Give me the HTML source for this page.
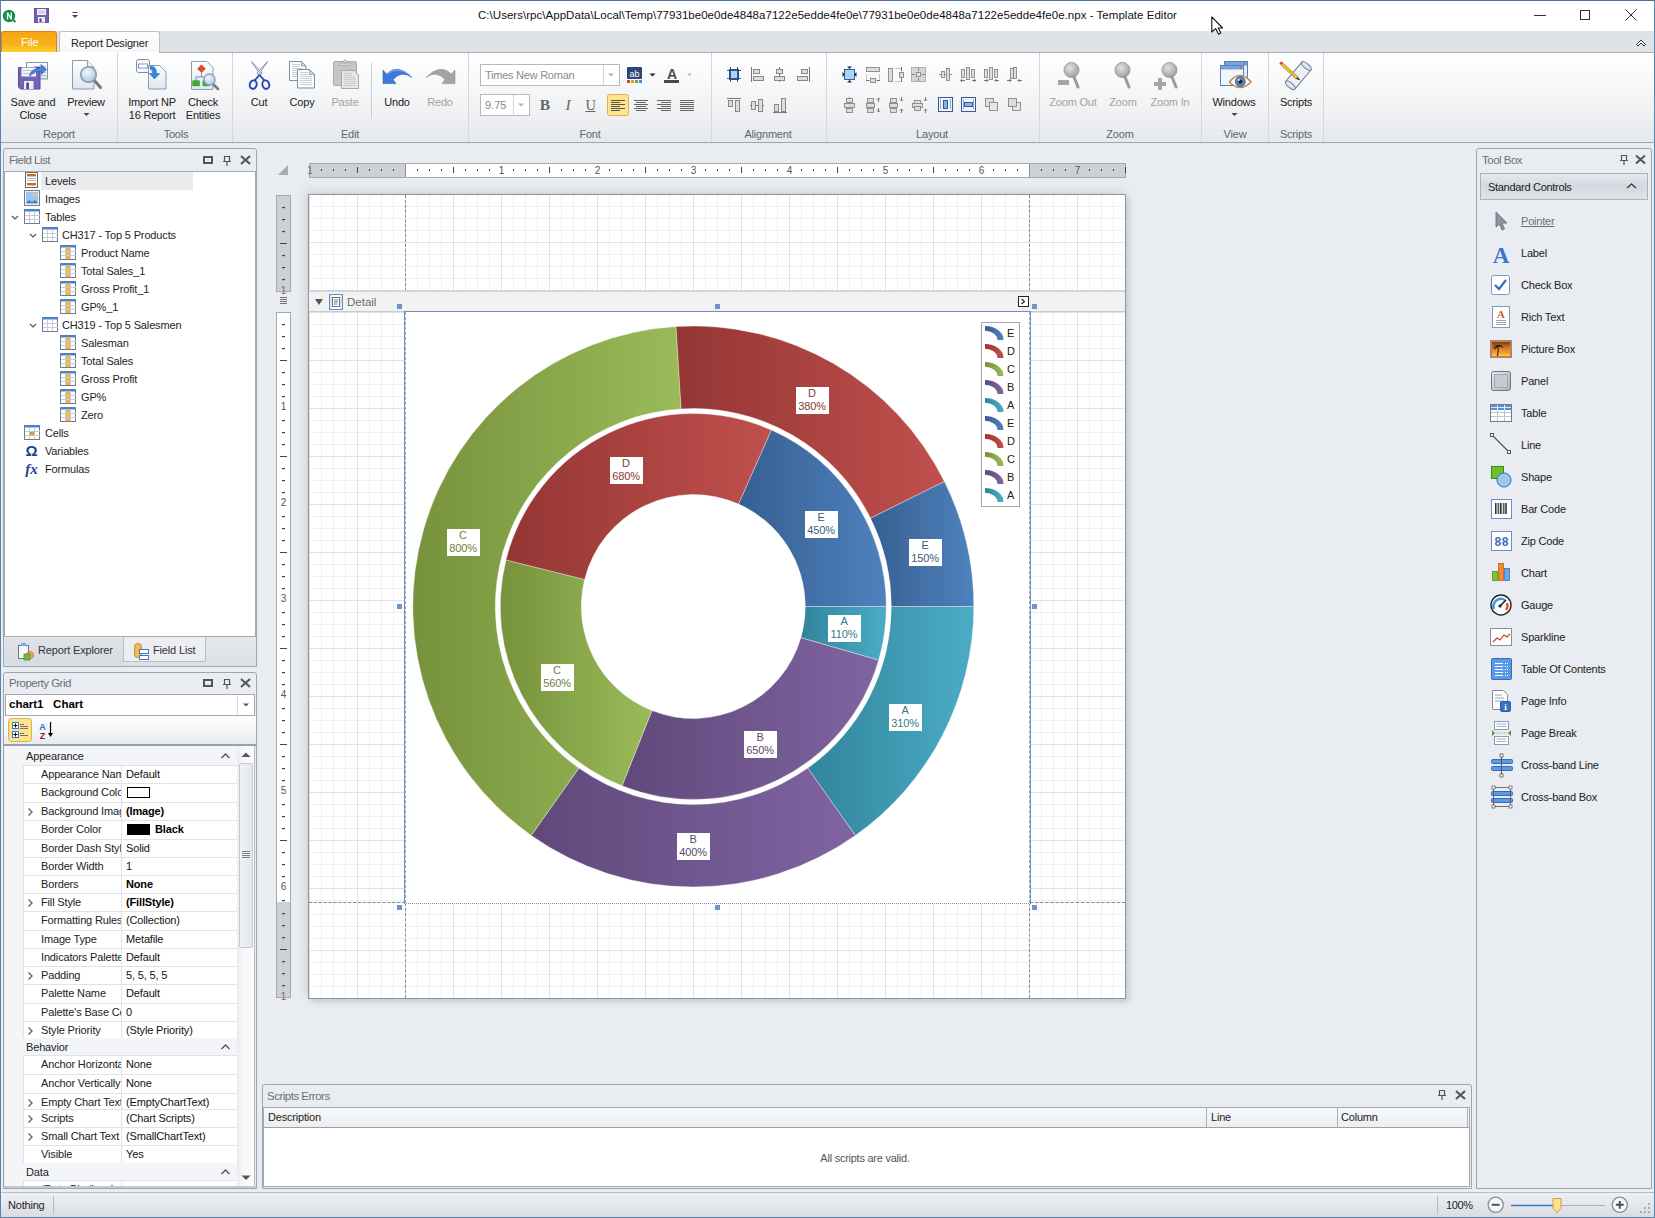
<!DOCTYPE html>
<html><head><meta charset="utf-8">
<style>
*{box-sizing:border-box;margin:0;padding:0}
html,body{width:1655px;height:1218px;overflow:hidden;background:#e9ecf0;font-family:"Liberation Sans",sans-serif;font-size:11px;color:#1e1e1e}
.a{position:absolute}
.t{position:absolute;white-space:nowrap;line-height:1}
svg{position:absolute;overflow:visible}
.gl{color:#5b5b5b}
.rl{position:absolute;top:129px;text-align:center;white-space:nowrap;line-height:1;color:#5e6670;letter-spacing:-0.2px}
.bl{position:absolute;width:100px;text-align:center;white-space:nowrap;line-height:13px;letter-spacing:-0.2px;color:#222}
.dis{color:#a3a3a3}
.hdr{color:#6b7079;font-size:11.5px;letter-spacing:-0.5px}
.tr{letter-spacing:-0.15px}
.lab{width:33px;height:27px;background:#fff;text-align:center;font-size:11px;line-height:13px;padding-top:0;padding-right:1px;letter-spacing:-0.1px}
</style></head><body>

<!-- window frame -->
<div class="a" style="left:0;top:0;width:1655px;height:1218px;border:1px solid #5a84a8;border-top-color:#4e7096"></div>

<!-- TITLE BAR -->
<div class="a" style="left:1px;top:1px;width:1653px;height:30px;background:#fff"></div>
<svg style="left:0;top:0" width="100" height="30">
  <circle cx="9" cy="16" r="6.2" fill="#0f9048"/>
  <path d="M13 20 l2.5 2" stroke="#0f8f4a" stroke-width="2"/>
  <path d="M6.8 19.5v-7h1.4l2.4 4.4v-4.4h1.4v7h-1.4l-2.4 -4.4v4.4z" fill="#fff"/>
  <rect x="34.5" y="8.5" width="14" height="14" fill="#6f60b4" stroke="#5a4aa6" stroke-width="0.9"/>
  <rect x="37" y="9" width="9" height="6" fill="#f6f6fa"/>
  <path d="M38 11h7M38 13h7" stroke="#a8a8c0" stroke-width="0.8"/>
  <rect x="38" y="17" width="7" height="5.5" fill="#ececf2"/>
  <rect x="39.5" y="18.5" width="2" height="3.5" fill="#4a3a96"/>
  <path d="M72.5 12.5 h5" stroke="#444" stroke-width="1"/>
  <path d="M72 15 h6 l-3 3z" fill="#444"/>
</svg>
<div class="t" style="left:478px;top:10px;font-size:11.5px;letter-spacing:0.035px;color:#111">C:\Users\rpc\AppData\Local\Temp\77931be0e0de4848a7122e5edde4fe0e\77931be0e0de4848a7122e5edde4fe0e.npx - Template Editor</div>
<svg style="left:1500px;top:0" width="155" height="31">
  <path d="M34 15.5 h12" stroke="#333" stroke-width="1"/>
  <rect x="80.5" y="10.5" width="9" height="9" fill="none" stroke="#333" stroke-width="1"/>
  <path d="M125.5 9.5 l11 11 M136.5 9.5 l-11 11" stroke="#333" stroke-width="1"/>
</svg>

<!-- TAB ROW -->
<div class="a" style="left:1px;top:31px;width:1653px;height:21px;background:#dfe3e8"></div>
<div class="a" style="left:1px;top:31px;width:56px;height:21px;background:linear-gradient(#f6a513,#f8b21a 60%,#fcd02a);border:1px solid #e97b10;border-bottom:none;border-radius:3px 3px 0 0"></div>
<div class="t" style="left:21px;top:37px;color:#fff;font-size:11px">File</div>
<div class="a" style="left:59px;top:31px;width:101px;height:22px;background:linear-gradient(#fdfdfd,#f6f7f8);border:1px solid #b9c1ca;border-bottom:none;border-radius:3px 3px 0 0"></div>
<div class="t" style="left:71px;top:38px;font-size:11px;letter-spacing:-0.2px;color:#222">Report Designer</div>
<svg style="left:1630px;top:33px" width="20" height="16">
  <path d="M6.5 11.5 l4.5 -4.5 l4.5 4.5 l-1.5 1.5 l-3 -3 l-3 3 z" fill="#fff" stroke="#333" stroke-width="1"/>
</svg>

<!-- RIBBON BODY -->
<div class="a" style="left:1px;top:52px;width:1653px;height:91px;background:linear-gradient(#ffffff 0%,#f6f7f8 40%,#e6e9ed 100%);border-bottom:1px solid #9ea6ae"></div>
<div class="a" style="left:159px;top:52px;width:1495px;height:1px;background:#aab3bd"></div>
<!-- ribbon separators -->
<div class="a" style="left:117px;top:53px;width:1px;height:89px;background:#d3d8de"></div>
<div class="a" style="left:232px;top:53px;width:1px;height:89px;background:#d3d8de"></div>
<div class="a" style="left:468px;top:53px;width:1px;height:89px;background:#d3d8de"></div>
<div class="a" style="left:711px;top:53px;width:1px;height:89px;background:#d3d8de"></div>
<div class="a" style="left:826px;top:53px;width:1px;height:89px;background:#d3d8de"></div>
<div class="a" style="left:1039px;top:53px;width:1px;height:89px;background:#d3d8de"></div>
<div class="a" style="left:1201px;top:53px;width:1px;height:89px;background:#d3d8de"></div>
<div class="a" style="left:1268px;top:53px;width:1px;height:89px;background:#d3d8de"></div>
<div class="a" style="left:1323px;top:53px;width:1px;height:89px;background:#d3d8de"></div>
<div class="a" style="left:371px;top:63px;width:1px;height:56px;background:#c9ced4"></div>
<!-- group labels -->
<div class="rl" style="left:9px;width:100px">Report</div>
<div class="rl" style="left:126px;width:100px">Tools</div>
<div class="rl" style="left:300px;width:100px">Edit</div>
<div class="rl" style="left:540px;width:100px">Font</div>
<div class="rl" style="left:718px;width:100px">Alignment</div>
<div class="rl" style="left:882px;width:100px">Layout</div>
<div class="rl" style="left:1070px;width:100px">Zoom</div>
<div class="rl" style="left:1185px;width:100px">View</div>
<div class="rl" style="left:1246px;width:100px">Scripts</div>
<!-- big button labels -->
<div class="bl" style="left:-17px;top:96px">Save and<br>Close</div>
<div class="bl" style="left:36px;top:96px">Preview</div>
<div class="bl" style="left:102px;top:96px">Import NP<br>16 Report</div>
<div class="bl" style="left:153px;top:96px">Check<br>Entities</div>
<div class="bl" style="left:209px;top:96px">Cut</div>
<div class="bl" style="left:252px;top:96px">Copy</div>
<div class="bl dis" style="left:295px;top:96px">Paste</div>
<div class="bl" style="left:347px;top:96px">Undo</div>
<div class="bl dis" style="left:390px;top:96px">Redo</div>
<div class="bl dis" style="left:1023px;top:96px">Zoom Out</div>
<div class="bl dis" style="left:1073px;top:96px">Zoom</div>
<div class="bl dis" style="left:1120px;top:96px">Zoom In</div>
<div class="bl" style="left:1184px;top:96px">Windows</div>
<div class="bl" style="left:1246px;top:96px">Scripts</div>
<svg style="left:0;top:0" width="1330" height="142">
 <defs>
  <linearGradient id="pg" x1="0" y1="0" x2="0" y2="1"><stop offset="0" stop-color="#ffffff"/><stop offset="1" stop-color="#dde6f0"/></linearGradient>
  <radialGradient id="lens" cx="0.4" cy="0.35" r="0.75"><stop offset="0" stop-color="#f2f7fc"/><stop offset="0.75" stop-color="#b6cfe8"/><stop offset="1" stop-color="#8fb0d2"/></radialGradient>
  <radialGradient id="glens" cx="0.4" cy="0.35" r="0.7"><stop offset="0" stop-color="#e2e2e2"/><stop offset="1" stop-color="#9a9a9a"/></radialGradient>
 </defs>
 <!-- dropdown arrows -->
 <path d="M83.5 113 h6 l-3 3z" fill="#444"/>
 <path d="M1231.5 113 h6 l-3 3z" fill="#444"/>
 <!-- Save and Close -->
 <rect x="26.5" y="62.5" width="21" height="16.5" fill="url(#pg)" stroke="#8496ad"/>
 <path d="M34 66.5h12M34 69.5h12M34 72.5h12M34 75.5h12" stroke="#9fb2c8" stroke-width="0.8"/>
 <path d="M18.5 67.5 h21.5 v21.5 h-19.5 l-2 -2z" fill="#7163b5" stroke="#5a4aa0"/>
 <rect x="21.5" y="67.5" width="14.5" height="9" fill="#f4f5f8"/>
 <path d="M23 70.5h11M23 73.5h11" stroke="#b0b4c4" stroke-width="0.8"/>
 <rect x="24" y="81" width="9.5" height="8" fill="#eeeeF2"/>
 <rect x="26.3" y="82.5" width="2.6" height="6.5" fill="#4d3e98"/>
 <path d="M29.5 76 Q31 68 41 68.2 L41 64.5 L46.5 69.5 L41 74.5 L41 71 Q35 71 29.5 76z" fill="#4a86d6" stroke="#2d62b0" stroke-width="0.7"/>
 <!-- Preview -->
 <path d="M72.5 60.5 h15 l6.5 6.5 v22 h-21.5z" fill="url(#pg)" stroke="#8b9bb0"/>
 <path d="M87.5 60.5 v6.5 h6.5" fill="#e9eef4" stroke="#8b9bb0"/>
 <path d="M94 80 l6.5 7.5" stroke="#7a7a7a" stroke-width="3" stroke-linecap="round"/>
 <circle cx="88.5" cy="74.5" r="7.8" fill="url(#lens)" stroke="#8e99a6" stroke-width="1.6"/>
 <!-- Import NP -->
 <rect x="136.5" y="59.5" width="13" height="13" rx="2" fill="#f6f8fb" stroke="#7b8da3"/>
 <rect x="138.5" y="64" width="9" height="4" fill="#fff" stroke="#5f86b8" stroke-width="0.8"/>
 <path d="M148.5 65.5 h11 l6.5 6.5 v17 h-17.5z" fill="url(#pg)" stroke="#8b9bb0"/>
 <path d="M150 66 q7 0 6.5 7.5 l3.3 0 l-5.3 5.5 l-5.3 -5.5 l3.3 0 q0 -4 -2.5 -4.5z" fill="#3a86d8" stroke="#2868b8" stroke-width="0.5"/>
 <!-- Check Entities -->
 <path d="M191.5 61.5 h15.5 l6 6 v22 h-21.5z" fill="url(#pg)" stroke="#8b9bb0"/>
 <path d="M201.5 64.5 l4.3 4.3 l-4.3 4.3 l-4.3 -4.3z" fill="#e8452a"/>
 <path d="M201.5 73 v4 M196 81 v-4 h11 v4" stroke="#6a86a8" fill="none" stroke-width="0.9"/>
 <rect x="192.8" y="80.8" width="6.5" height="5" fill="#3fae2a" stroke="#2a8a18" stroke-width="0.6"/>
 <rect x="203" y="80.8" width="6.5" height="5" fill="#3fae2a" stroke="#2a8a18" stroke-width="0.6"/>
 <path d="M213 84 l5 5" stroke="#7a7a7a" stroke-width="2.6" stroke-linecap="round"/>
 <circle cx="209.5" cy="79.6" r="5.6" fill="url(#lens)" stroke="#8e99a6" stroke-width="1.3"/>
 <!-- Cut -->
 <path d="M251.5 61.5 L260.5 75 L262 73 Z" fill="#eef2f6" stroke="#6d7f96" stroke-width="0.8"/>
 <path d="M267.5 61.5 L258.5 75 L257 73 Z" fill="#eef2f6" stroke="#6d7f96" stroke-width="0.8"/>
 <path d="M259.5 75 L254.5 80.5 M259.5 75 L264.5 80.5" stroke="#2045b5" stroke-width="1.8"/>
 <ellipse cx="253.2" cy="84.6" rx="3.4" ry="4.3" transform="rotate(15 253.2 84.6)" fill="none" stroke="#2045b5" stroke-width="1.9"/>
 <ellipse cx="265.8" cy="84.6" rx="3.4" ry="4.3" transform="rotate(-15 265.8 84.6)" fill="none" stroke="#2045b5" stroke-width="1.9"/>
 <!-- Copy -->
 <path d="M289.5 61.5 h12 l4.5 4.5 v14.5 h-16.5z" fill="#fbfcfd" stroke="#7d8da2"/>
 <path d="M301.5 61.5 v4.5 h4.5z" fill="#c8d8ea" stroke="#7d8da2" stroke-width="0.7"/>
 <path d="M292 64.5h8M292 66.5h8M292 68.5h11M292 70.5h11M292 72.5h11M292 74.5h11M292 76.5h11" stroke="#a7b3c0" stroke-width="0.6"/>
 <path d="M297.5 69.5 h12 l5 5 v13.5 h-17z" fill="#fbfcfd" stroke="#7d8da2"/>
 <path d="M309.5 69.5 v5 h5z" fill="#c8d8ea" stroke="#7d8da2" stroke-width="0.7"/>
 <path d="M300 72.5h8M300 74.5h8M300 76.5h12M300 78.5h12M300 80.5h12M300 82.5h12M300 84.5h12" stroke="#a7b3c0" stroke-width="0.6"/>
 <!-- Paste (disabled) -->
 <rect x="333.5" y="61.5" width="23" height="24" rx="1.5" fill="#c6c6c6" stroke="#ababab"/>
 <rect x="339" y="63" width="12" height="2.5" rx="1" fill="#d6d6d6" stroke="#a0a0a0" stroke-width="0.7"/>
 <circle cx="345" cy="61.5" r="1.6" fill="#d6d6d6" stroke="#a0a0a0" stroke-width="0.7"/>
 <path d="M341.5 70.5 h12.5 l4.5 4.5 v13.5 h-17z" fill="#e6e6e6" stroke="#a9a9a9"/>
 <path d="M344 73.5h8M344 75.5h8M344 77.5h12M344 79.5h12M344 81.5h12M344 83.5h12M344 85.5h12" stroke="#b8b8b8" stroke-width="0.6"/>
 <!-- Undo -->
 <path d="M383 70 L386.5 74 Q398 63 412 77.5 Q402 70 393 79.5 L396 83.6 L383 83.6 Z" fill="#3f78d8" stroke="#2f62c0" stroke-width="0.6"/>
 <path d="M387 74 Q398 66 410 75" fill="none" stroke="#86aef0" stroke-width="1"/>
 <!-- Redo disabled -->
 <path d="M455 70 L451.5 74 Q440 63 426 77.5 Q436 70 445 79.5 L442 83.6 L455 83.6 Z" fill="#a4a4a4" stroke="#939393" stroke-width="0.6"/>
 <!-- Font combo -->
 <rect x="480.5" y="64.5" width="139" height="21" fill="#fff" stroke="#b1b8c0"/>
 <path d="M603.5 65 v20" stroke="#d1d6dc"/>
 <path d="M608 73.5 h6 l-3 3z" fill="#b0b0b0"/>
 <rect x="480.5" y="94.5" width="49" height="21" fill="#fff" stroke="#b1b8c0"/>
 <path d="M513.5 95 v20" stroke="#d1d6dc"/>
 <path d="M518 103.5 h6 l-3 3z" fill="#b0b0b0"/>
 <!-- highlight ab -->
 <rect x="627" y="67" width="15" height="12" rx="1" fill="#2e4579"/>
 <text x="634.5" y="76.5" font-family="Liberation Sans" font-size="9" fill="#fff" text-anchor="middle">ab</text>
 <rect x="627" y="80" width="3" height="3" fill="#d9472b"/><rect x="631" y="80" width="3" height="3" fill="#e89a20"/><rect x="635" y="80" width="3" height="3" fill="#6aa83a"/><rect x="639" y="80" width="3" height="3" fill="#3e8ad6"/>
 <path d="M649.5 73.5 h6 l-3 3z" fill="#222"/>
 <!-- font color -->
 <text x="672" y="79" font-family="Liberation Sans" font-weight="bold" font-size="14" fill="#4a4a4a" text-anchor="middle">A</text>
 <rect x="664" y="80" width="15" height="3" fill="#4a4a4a"/>
 <path d="M687 73.5 h5 l-2.5 2.5z" fill="#b5b5b5"/>
 <!-- B I U -->
 <text x="545" y="110.3" font-family="Liberation Serif" font-weight="bold" font-size="15.5" fill="#666" text-anchor="middle">B</text>
 <text x="568" y="110.3" font-family="Liberation Serif" font-style="italic" font-size="15.5" fill="#666" text-anchor="middle">I</text>
 <text x="590.8" y="109.8" font-family="Liberation Serif" font-size="14.5" fill="#666" text-anchor="middle">U</text>
 <path d="M585.5 111.5 h10" stroke="#666" stroke-width="1.1"/>
 <!-- align left highlighted -->
 <rect x="607.5" y="94.5" width="21" height="21" rx="2" fill="#fde48f" stroke="#e0b34a"/>
 <path d="M611 100.5h14M611 102.5h9M611 104.5h14M611 106.5h9M611 108.5h14M611 110.5h9" stroke="#444" stroke-width="0.9"/>
 <path d="M634 100.5h14M636 102.5h10M634 104.5h14M636 106.5h10M634 108.5h14M636 110.5h10" stroke="#555" stroke-width="0.9"/>
 <path d="M657 100.5h14M661 102.5h10M657 104.5h14M661 106.5h10M657 108.5h14M661 110.5h10" stroke="#555" stroke-width="0.9"/>
 <path d="M680 100.5h14M680 102.5h14M680 104.5h14M680 106.5h14M680 108.5h14M680 110.5h14" stroke="#555" stroke-width="0.9"/>
 <!-- alignment group -->
 <rect x="729.5" y="69.5" width="9" height="10" fill="#a8d4f5" stroke="#2a4a8a"/>
 <path d="M727 70.5h14M727 78.5h14M730.5 67v15M737.5 67v15" stroke="#2a4a8a" stroke-width="0.9"/>
 <path d="M751.5 67v15" stroke="#777"/><rect x="753.5" y="69.5" width="6" height="4" fill="#ddd" stroke="#888"/><rect x="753.5" y="76.5" width="10" height="4" fill="#ddd" stroke="#888"/>
 <path d="M779.5 67v15" stroke="#777"/><rect x="776.5" y="69.5" width="6" height="4" fill="#ddd" stroke="#888"/><rect x="774.5" y="76.5" width="10" height="4" fill="#ddd" stroke="#888"/>
 <path d="M809.5 67v15" stroke="#777"/><rect x="801.5" y="69.5" width="6" height="4" fill="#ddd" stroke="#888"/><rect x="797.5" y="76.5" width="10" height="4" fill="#ddd" stroke="#888"/>
 <path d="M727 98.5h14" stroke="#777"/><rect x="728.5" y="100.5" width="4" height="6" fill="#ddd" stroke="#888"/><rect x="735.5" y="100.5" width="4" height="11" fill="#ddd" stroke="#888"/>
 <path d="M750 105.5h14" stroke="#777"/><rect x="751.5" y="101.5" width="4" height="8" fill="#ddd" stroke="#888"/><rect x="758.5" y="99.5" width="4" height="12" fill="#ddd" stroke="#888"/>
 <path d="M773 112.5h14" stroke="#777"/><rect x="774.5" y="104.5" width="4" height="7" fill="#ddd" stroke="#888"/><rect x="781.5" y="98.5" width="4" height="13" fill="#ddd" stroke="#888"/>
 <!-- layout group row1 -->
 <g stroke-width="0.9">
 <rect x="844.5" y="69.5" width="10" height="10" fill="#a8d4f5" stroke="#2a4a8a"/><path d="M847 66.5h5l-2.5 2.5zM847 82.5h5l-2.5 -2.5zM842.5 72l2.5 2.5l-2.5 2.5zM856.5 72l-2.5 2.5l2.5 2.5z" fill="#1a2a50"/>
 <rect x="866.5" y="67.5" width="13" height="4" fill="#ddd" stroke="#888"/><path d="M866.5 74.5v6h13v-6" fill="none" stroke="#888" stroke-dasharray="1 1"/><rect x="870.5" y="78.5" width="5" height="4" fill="#ddd" stroke="#888"/><path d="M866 80.5h3M877 80.5h3" stroke="#666"/>
 <rect x="888.5" y="68.5" width="4" height="13" fill="#ddd" stroke="#888"/><path d="M895.5 68.5h6v13h-6" fill="none" stroke="#888" stroke-dasharray="1 1"/><rect x="899.5" y="72.5" width="4" height="5" fill="#ddd" stroke="#888"/><path d="M901.5 67v4M901.5 78v4" stroke="#666"/>
 <rect x="911.5" y="67.5" width="14" height="14" fill="#d6d6d6" stroke="#aaa"/><rect x="916.5" y="72.5" width="4" height="4" fill="#e8e8e8" stroke="#888"/><path d="M918.5 68v3M918.5 78v3M912 74.5h3M922 74.5h3" stroke="#777"/>
 <path d="M939 74.5h13" stroke="#888"/><rect x="941.5" y="71.5" width="3" height="6" fill="#ddd" stroke="#888"/><rect x="946.5" y="68.5" width="3" height="12" fill="#ddd" stroke="#888"/>
 <rect x="961.5" y="69.5" width="3" height="8" fill="#ddd" stroke="#888"/><rect x="966.5" y="67.5" width="3" height="12" fill="#ddd" stroke="#888"/><rect x="971.5" y="69.5" width="3" height="8" fill="#ddd" stroke="#888"/><path d="M961 80.5h4M972 80.5h4M962 79l-1.5 1.5l1.5 1.5M974 79l1.5 1.5l-1.5 1.5" fill="none" stroke="#666"/>
 <rect x="984.5" y="69.5" width="3" height="8" fill="#ddd" stroke="#888"/><rect x="989.5" y="67.5" width="3" height="12" fill="#ddd" stroke="#888"/><rect x="994.5" y="69.5" width="3" height="8" fill="#ddd" stroke="#888"/><path d="M984 80.5h4M995 80.5h4M986.5 79l1.5 1.5l-1.5 1.5M996.5 79l-1.5 1.5l1.5 1.5" fill="none" stroke="#666"/>
 <rect x="1010.5" y="68.5" width="3" height="10" fill="#ddd" stroke="#888"/><rect x="1013.5" y="67.5" width="3" height="11" fill="#ddd" stroke="#888"/><path d="M1007 80.5h4M1018 80.5h4M1009.5 79l1.5 1.5l-1.5 1.5M1019.5 79l-1.5 1.5l1.5 1.5" fill="none" stroke="#666"/>
 <!-- row2 -->
 <path d="M849.5 97v16" stroke="#888"/><rect x="846.5" y="98.5" width="6" height="4" fill="#ddd" stroke="#888"/><rect x="844.5" y="103.5" width="10" height="4" fill="#ddd" stroke="#888"/><rect x="846.5" y="108.5" width="6" height="4" fill="#ddd" stroke="#888"/>
 <rect x="867.5" y="98.5" width="6" height="4" fill="#ddd" stroke="#888"/><rect x="866.5" y="103.5" width="8" height="4" fill="#ddd" stroke="#888"/><rect x="867.5" y="108.5" width="6" height="4" fill="#ddd" stroke="#888"/><path d="M878.5 98v4M878.5 108v4M877 99.5l1.5 -1.5l1.5 1.5M877 110.5l1.5 1.5l1.5 -1.5" fill="none" stroke="#666"/>
 <rect x="890.5" y="98.5" width="6" height="4" fill="#ddd" stroke="#888"/><rect x="889.5" y="103.5" width="8" height="4" fill="#ddd" stroke="#888"/><rect x="890.5" y="108.5" width="6" height="4" fill="#ddd" stroke="#888"/><path d="M901.5 97v4M901.5 109v4M900 99.5l1.5 1.5l1.5 -1.5M900 110.5l1.5 -1.5l1.5 1.5" fill="none" stroke="#666"/>
 <rect x="914.5" y="100.5" width="6" height="4" fill="#ddd" stroke="#888"/><rect x="912.5" y="103.5" width="10" height="4" fill="#ddd" stroke="#888"/><rect x="914.5" y="106.5" width="6" height="4" fill="#ddd" stroke="#888"/><path d="M925.5 97v4M925.5 109v4M924 99.5l1.5 1.5l1.5 -1.5M924 110.5l1.5 -1.5l1.5 1.5" fill="none" stroke="#666"/>
 <rect x="938.5" y="97.5" width="14" height="14" fill="#eef4fb" stroke="#2a4a8a"/><rect x="943.5" y="100.5" width="4" height="8" fill="#7fb8ea" stroke="#2a4a8a"/><path d="M940.5 99.5v10M950.5 99.5v10" stroke="#2a4a8a" stroke-dasharray="1 1"/>
 <rect x="961.5" y="97.5" width="14" height="14" fill="#eef4fb" stroke="#2a4a8a"/><rect x="964.5" y="102.5" width="8" height="4" fill="#7fb8ea" stroke="#2a4a8a"/><path d="M963.5 99.5v10M973.5 99.5v10" stroke="#2a4a8a" stroke-dasharray="1 1"/>
 <rect x="985.5" y="98.5" width="8" height="8" fill="#ddd" stroke="#888"/><rect x="989.5" y="102.5" width="8" height="8" fill="#e6e6e6" stroke="#888"/>
 <rect x="1012.5" y="102.5" width="8" height="8" fill="#e6e6e6" stroke="#888"/><rect x="1008.5" y="98.5" width="8" height="8" fill="#ddd" stroke="#888"/>
 </g>
 <!-- Zoom -->
 <circle cx="1071.5" cy="70" r="7.5" fill="url(#glens)" stroke="#a0a0a0"/>
 <path d="M1074 77 l4 10" stroke="#9a9a9a" stroke-width="3" stroke-linecap="round"/>
 <rect x="1058" y="80" width="11" height="5" fill="#a5a5a5"/>
 <circle cx="1122.5" cy="70" r="7.5" fill="url(#glens)" stroke="#a0a0a0"/>
 <path d="M1125 77 l4 10" stroke="#9a9a9a" stroke-width="3" stroke-linecap="round"/>
 <circle cx="1169.5" cy="70" r="7.5" fill="url(#glens)" stroke="#a0a0a0"/>
 <path d="M1172 77 l4 10" stroke="#9a9a9a" stroke-width="3" stroke-linecap="round"/>
 <path d="M1158 78h4v4h4v4h-4v4h-4v-4h-4v-4h4z" fill="#a5a5a5"/>
 <!-- Windows -->
 <rect x="1224.5" y="61.5" width="23" height="19" fill="#e4edf8" stroke="#5a7fb8"/>
 <rect x="1225" y="62" width="22" height="3.5" fill="#7aa4dc"/>
 <rect x="1220.5" y="65.5" width="23" height="20" fill="#f2f6fb" stroke="#5a7fb8"/>
 <rect x="1221" y="66" width="22" height="3.5" fill="#7aa4dc"/>
 <circle cx="1240.5" cy="67.8" r="1" fill="#e04040"/><circle cx="1244.5" cy="63.8" r="1" fill="#e04040"/>
 <path d="M1229.5 82 Q1240 69 1251 82 Q1240 93 1229.5 82Z" fill="#fff" stroke="#b98a58" stroke-width="1.6"/>
 <circle cx="1240.3" cy="81.6" r="5" fill="#6a86b0" stroke="#3d5680" stroke-width="0.8"/><circle cx="1240.3" cy="81.6" r="2.2" fill="#1a2a44"/><circle cx="1238.8" cy="80" r="0.9" fill="#fff"/>
 <!-- Scripts -->
 <g transform="rotate(-50 1298 76)">
  <rect x="1286" y="70" width="25" height="12" fill="#eef2f8" stroke="#6f7d90"/>
  <ellipse cx="1286" cy="76" rx="2.5" ry="6" fill="#dfe5ee" stroke="#6f7d90"/>
  <ellipse cx="1311" cy="76" rx="2.5" ry="6" fill="#dfe5ee" stroke="#6f7d90"/>
 </g>
 <path d="M1283 63 l15 14 l-2 2 l-15 -14z" fill="#f0c030" stroke="#8a6a20" stroke-width="0.6"/>
 <path d="M1281 65 l2 -2.2 l-1.6 -1.6 l-2.2 2z" fill="#e04030"/>
 <path d="M1298 77 l2.5 3.5 l-4.5 -1.5z" fill="#333"/>
</svg>


<!-- MAIN PANELS placeholder -->
<div class="t" style="left:485px;top:70px;color:#8a8a8a;letter-spacing:-0.25px">Times New Roman</div>
<div class="t" style="left:485px;top:100px;color:#8a8a8a">9.75</div>
<!-- LEFT PANELS -->
<div class="a" style="left:3px;top:148px;width:254px;height:519px;border:1px solid #9ea5ad;border-radius:3px 3px 0 0;background:#e9ecf0"></div>
<div class="t hdr" style="left:9px;top:155px">Field List</div>
<svg style="left:0;top:156px" width="260" height="12"><rect x="204" y="1" width="8" height="6" fill="none" stroke="#50555c" stroke-width="2"/><path d="M224.5 0.5 h5 v5 h-5z M223 5.5 h8 M227 6 v4" fill="none" stroke="#50555c" stroke-width="1.2"/><path d="M241 0 l9 8 M250 0 l-9 8" stroke="#50555c" stroke-width="2"/></svg>
<div class="a" style="left:4px;top:171px;width:252px;height:466px;border:1px solid #a2a9b1;background:#fff"></div>
<div class="a" style="left:41px;top:172px;width:152px;height:18px;background:#eaebed"></div>
<div class="t tr" style="left:45px;top:176px">Levels</div>
<div class="t tr" style="left:45px;top:194px">Images</div>
<div class="t tr" style="left:45px;top:212px">Tables</div>
<div class="t tr" style="left:62px;top:230px">CH317 - Top 5 Products</div>
<div class="t tr" style="left:81px;top:248px">Product Name</div>
<div class="t tr" style="left:81px;top:266px">Total Sales_1</div>
<div class="t tr" style="left:81px;top:284px">Gross Profit_1</div>
<div class="t tr" style="left:81px;top:302px">GP%_1</div>
<div class="t tr" style="left:62px;top:320px">CH319 - Top 5 Salesmen</div>
<div class="t tr" style="left:81px;top:338px">Salesman</div>
<div class="t tr" style="left:81px;top:356px">Total Sales</div>
<div class="t tr" style="left:81px;top:374px">Gross Profit</div>
<div class="t tr" style="left:81px;top:392px">GP%</div>
<div class="t tr" style="left:81px;top:410px">Zero</div>
<div class="t tr" style="left:45px;top:428px">Cells</div>
<div class="t tr" style="left:45px;top:446px">Variables</div>
<div class="t tr" style="left:45px;top:464px">Formulas</div>
<svg style="left:0;top:0" width="260" height="500"><rect x="25.5" y="172.5" width="12" height="15" fill="#fff" stroke="#5a6c80"/><rect x="27" y="174" width="9" height="2.4" fill="#d06a10"/><rect x="27" y="183" width="9" height="2.4" fill="#d06a10"/><path d="M27 178.5h9M27 180.5h9" stroke="#9ab0d0" stroke-width="0.8"/><rect x="24.5" y="190.5" width="15" height="15" fill="#e8f0fa" stroke="#6d7d90"/><rect x="26" y="192" width="12" height="12" fill="#9cc8f0"/><circle cx="35" cy="195" r="2" fill="#f8c080"/><path d="M26 203 l3 -3 l3 2 l3 -2 l3 3z" fill="#4a78b8"/><path d="M12 216 l3 3 l3 -3" fill="none" stroke="#555" stroke-width="1.2"/><rect x="24.5" y="209.5" width="15" height="14" fill="#fff" stroke="#6d7d90"/><rect x="25" y="209" width="15" height="2.5" fill="#4a82d0"/><path d="M25 215.5h15M25 219.5h15M29.5 211v12M34.5 211v12" stroke="#c4ccd8" stroke-width="1"/><path d="M30 234 l3 3 l3 -3" fill="none" stroke="#555" stroke-width="1.2"/><rect x="42.5" y="227.5" width="15" height="14" fill="#fff" stroke="#6d7d90"/><rect x="43" y="227" width="15" height="2.5" fill="#4a82d0"/><path d="M43 233.5h15M43 237.5h15M47.5 229v12M52.5 229v12" stroke="#c4ccd8" stroke-width="1"/><rect x="60.5" y="245.5" width="15" height="14" fill="#fff" stroke="#6d7d90"/><rect x="61" y="245" width="15" height="2.5" fill="#4a82d0"/><rect x="66" y="247.5" width="4" height="11.5" fill="#f0b840"/><path d="M61 251.5h15M61 255.5h15M65.5 247v12M70.5 247v12" stroke="#c4ccd8" stroke-width="1"/><rect x="60.5" y="263.5" width="15" height="14" fill="#fff" stroke="#6d7d90"/><rect x="61" y="263" width="15" height="2.5" fill="#4a82d0"/><rect x="66" y="265.5" width="4" height="11.5" fill="#f0b840"/><path d="M61 269.5h15M61 273.5h15M65.5 265v12M70.5 265v12" stroke="#c4ccd8" stroke-width="1"/><rect x="60.5" y="281.5" width="15" height="14" fill="#fff" stroke="#6d7d90"/><rect x="61" y="281" width="15" height="2.5" fill="#4a82d0"/><rect x="66" y="283.5" width="4" height="11.5" fill="#f0b840"/><path d="M61 287.5h15M61 291.5h15M65.5 283v12M70.5 283v12" stroke="#c4ccd8" stroke-width="1"/><rect x="60.5" y="299.5" width="15" height="14" fill="#fff" stroke="#6d7d90"/><rect x="61" y="299" width="15" height="2.5" fill="#4a82d0"/><rect x="66" y="301.5" width="4" height="11.5" fill="#f0b840"/><path d="M61 305.5h15M61 309.5h15M65.5 301v12M70.5 301v12" stroke="#c4ccd8" stroke-width="1"/><path d="M30 324 l3 3 l3 -3" fill="none" stroke="#555" stroke-width="1.2"/><rect x="42.5" y="317.5" width="15" height="14" fill="#fff" stroke="#6d7d90"/><rect x="43" y="317" width="15" height="2.5" fill="#4a82d0"/><path d="M43 323.5h15M43 327.5h15M47.5 319v12M52.5 319v12" stroke="#c4ccd8" stroke-width="1"/><rect x="60.5" y="335.5" width="15" height="14" fill="#fff" stroke="#6d7d90"/><rect x="61" y="335" width="15" height="2.5" fill="#4a82d0"/><rect x="66" y="337.5" width="4" height="11.5" fill="#f0b840"/><path d="M61 341.5h15M61 345.5h15M65.5 337v12M70.5 337v12" stroke="#c4ccd8" stroke-width="1"/><rect x="60.5" y="353.5" width="15" height="14" fill="#fff" stroke="#6d7d90"/><rect x="61" y="353" width="15" height="2.5" fill="#4a82d0"/><rect x="66" y="355.5" width="4" height="11.5" fill="#f0b840"/><path d="M61 359.5h15M61 363.5h15M65.5 355v12M70.5 355v12" stroke="#c4ccd8" stroke-width="1"/><rect x="60.5" y="371.5" width="15" height="14" fill="#fff" stroke="#6d7d90"/><rect x="61" y="371" width="15" height="2.5" fill="#4a82d0"/><rect x="66" y="373.5" width="4" height="11.5" fill="#f0b840"/><path d="M61 377.5h15M61 381.5h15M65.5 373v12M70.5 373v12" stroke="#c4ccd8" stroke-width="1"/><rect x="60.5" y="389.5" width="15" height="14" fill="#fff" stroke="#6d7d90"/><rect x="61" y="389" width="15" height="2.5" fill="#4a82d0"/><rect x="66" y="391.5" width="4" height="11.5" fill="#f0b840"/><path d="M61 395.5h15M61 399.5h15M65.5 391v12M70.5 391v12" stroke="#c4ccd8" stroke-width="1"/><rect x="60.5" y="407.5" width="15" height="14" fill="#fff" stroke="#6d7d90"/><rect x="61" y="407" width="15" height="2.5" fill="#4a82d0"/><rect x="66" y="409.5" width="4" height="11.5" fill="#f0b840"/><path d="M61 413.5h15M61 417.5h15M65.5 409v12M70.5 409v12" stroke="#c4ccd8" stroke-width="1"/><rect x="24.5" y="425.5" width="15" height="14" fill="#fff" stroke="#6d7d90"/><rect x="25" y="425" width="15" height="2.5" fill="#4a82d0"/><path d="M25 431.5h15M25 435.5h15M29.5 427v12M34.5 427v12" stroke="#c4ccd8" stroke-width="1"/><rect x="30" y="432" width="4" height="3" fill="#e09a20"/><text x="31.5" y="456" font-family="Liberation Sans" font-weight="bold" font-size="15" fill="#27409a" text-anchor="middle">Ω</text><text x="31.5" y="473.5" font-family="Liberation Serif" font-style="italic" font-weight="bold" font-size="15" fill="#27409a" text-anchor="middle">fx</text></svg>
<div class="a" style="left:4px;top:637px;width:252px;height:29px;background:linear-gradient(#e4e7ec,#dde1e7)"></div>
<div class="a" style="left:5px;top:638px;width:118px;height:27px;background:linear-gradient(#dfe3e9,#d6dbe2)"></div>
<div class="a" style="left:123px;top:637px;width:83px;height:25px;background:#eceef2;border:1px solid #b7bec6;border-top:none"></div>
<div class="t tr" style="left:38px;top:645px;color:#333">Report Explorer</div>
<div class="t tr" style="left:153px;top:645px;color:#333">Field List</div>
<svg style="left:0;top:640px" width="220" height="24"><rect x="18.5" y="5.5" width="10" height="13" fill="#f4f6f8" stroke="#6d7480"/><rect x="21" y="3" width="5" height="3" fill="#7aa8e0"/><circle cx="30" cy="15" r="3.5" fill="#f0a060" stroke="#d07030" stroke-width="0.8"/><rect x="24" y="14" width="6" height="6" fill="#6cc030" stroke="#4a9a20" stroke-width="0.8"/><rect x="134.5" y="3.5" width="7" height="14" rx="3" fill="#f2b860" stroke="#d08a30"/><rect x="139.5" y="9.5" width="9" height="4" fill="#fff" stroke="#3a78c8"/><rect x="139.5" y="15.5" width="9" height="4" fill="#fff" stroke="#3a78c8"/></svg>
<div class="a" style="left:3px;top:672px;width:254px;height:517px;border:1px solid #9ea5ad;border-radius:3px 3px 0 0;background:#e9ecf0"></div>
<div class="t hdr" style="left:9px;top:678px">Property Grid</div>
<svg style="left:0;top:679px" width="260" height="12"><rect x="204" y="1" width="8" height="6" fill="none" stroke="#50555c" stroke-width="2"/><path d="M224.5 0.5 h5 v5 h-5z M223 5.5 h8 M227 6 v4" fill="none" stroke="#50555c" stroke-width="1.2"/><path d="M241 0 l9 8 M250 0 l-9 8" stroke="#50555c" stroke-width="2"/></svg>
<div class="a" style="left:5px;top:694px;width:250px;height:22px;border:1px solid #a2a9b1;background:#fff"></div>
<div class="a" style="left:237px;top:695px;width:1px;height:20px;background:#d8dce1"></div>
<svg style="left:0;top:700px" width="260" height="10"><path d="M243 3.5h6l-3 3z" fill="#555"/></svg>
<div class="t" style="left:9px;top:699px;font-weight:bold;font-size:11.5px;color:#000;font-family:'Liberation Sans'">chart1&nbsp;&nbsp;&nbsp;Chart</div>
<div class="a" style="left:4px;top:716px;width:252px;height:29px;background:linear-gradient(#ffffff,#e8ebef)"></div>
<svg style="left:0;top:715px" width="60" height="30"><rect x="8.5" y="3.5" width="23" height="23" rx="3" fill="#fde38a" stroke="#d9b24e"/><rect x="12.5" y="7.5" width="6" height="6" fill="#fff" stroke="#2a7de0"/><path d="M13.5 10.5h4M15.5 8.5v4" stroke="#000" stroke-width="1"/><rect x="12.5" y="16.5" width="6" height="6" fill="#fff" stroke="#2a7de0"/><path d="M13.5 19.5h4M15.5 17.5v4" stroke="#000" stroke-width="1"/><path d="M20 9.5h4M20 11.5h8M20 13.5h8M20 18.5h4M20 20.5h8" stroke="#666" stroke-width="0.9"/><text x="42.5" y="15" font-family="Liberation Sans" font-weight="bold" font-size="9" fill="#2a6ee0" text-anchor="middle">A</text><text x="42.5" y="23.5" font-family="Liberation Sans" font-weight="bold" font-size="9" fill="#a01818" text-anchor="middle">Z</text><path d="M50.5 7v13" stroke="#000" stroke-width="1.2"/><path d="M48 18 h5 l-2.5 4z" fill="#000"/></svg>
<div class="a" style="left:4px;top:744px;width:252px;height:2px;background:#9aa1a9"></div>
<div class="a" style="left:5px;top:746px;width:232px;height:440px;background:#f3f5f8;overflow:hidden">
<div class="t tr" style="left:21px;top:4.50px;color:#222">Appearance</div>
<svg style="left:215px;top:6.00px" width="14" height="8"><path d="M1.5 6 l4 -4 l4 4" fill="none" stroke="#555" stroke-width="1.4"/></svg>
<div class="a" style="left:18px;top:19.00px;width:214px;height:19.00px;background:#fff;border-top:1px solid #dfe2e6;border-left:1px solid #dfe2e6"></div>
<div class="a" style="left:116px;top:19.00px;width:1px;height:19.00px;background:#dfe2e6"></div>
<div class="t tr" style="left:36px;top:22.50px;width:80px;overflow:hidden;color:#222">Appearance Name</div>
<div class="t tr" style="left:121px;top:22.50px;color:#111">Default</div>
<div class="a" style="left:18px;top:37.00px;width:214px;height:20.00px;background:#fff;border-top:1px solid #dfe2e6;border-left:1px solid #dfe2e6"></div>
<div class="a" style="left:116px;top:37.00px;width:1px;height:20.00px;background:#dfe2e6"></div>
<div class="t tr" style="left:36px;top:40.50px;width:80px;overflow:hidden;color:#222">Background Color</div>
<div class="a" style="left:122px;top:41.00px;width:23px;height:11px;border:1px solid #000;background:#fff"></div>
<div class="a" style="left:18px;top:56.00px;width:214px;height:19.00px;background:#fff;border-top:1px solid #dfe2e6;border-left:1px solid #dfe2e6"></div>
<div class="a" style="left:116px;top:56.00px;width:1px;height:19.00px;background:#dfe2e6"></div>
<div class="t tr" style="left:36px;top:59.50px;width:80px;overflow:hidden;color:#222">Background Image</div>
<svg style="left:22px;top:61.00px" width="8" height="10"><path d="M1.5 1.5 l3.5 3.5 l-3.5 3.5" fill="none" stroke="#666" stroke-width="1.4"/></svg>
<div class="t tr" style="left:121px;top:59.50px;font-weight:bold;color:#000">(Image)</div>
<div class="a" style="left:18px;top:74.00px;width:214px;height:20.00px;background:#fff;border-top:1px solid #dfe2e6;border-left:1px solid #dfe2e6"></div>
<div class="a" style="left:116px;top:74.00px;width:1px;height:20.00px;background:#dfe2e6"></div>
<div class="t tr" style="left:36px;top:77.50px;width:80px;overflow:hidden;color:#222">Border Color</div>
<div class="a" style="left:122px;top:78.00px;width:23px;height:11px;background:#000"></div>
<div class="t tr" style="left:150px;top:77.50px;font-weight:bold;color:#000">Black</div>
<div class="a" style="left:18px;top:93.00px;width:214px;height:19.00px;background:#fff;border-top:1px solid #dfe2e6;border-left:1px solid #dfe2e6"></div>
<div class="a" style="left:116px;top:93.00px;width:1px;height:19.00px;background:#dfe2e6"></div>
<div class="t tr" style="left:36px;top:96.50px;width:80px;overflow:hidden;color:#222">Border Dash Style</div>
<div class="t tr" style="left:121px;top:96.50px;color:#111">Solid</div>
<div class="a" style="left:18px;top:111.00px;width:214px;height:19.00px;background:#fff;border-top:1px solid #dfe2e6;border-left:1px solid #dfe2e6"></div>
<div class="a" style="left:116px;top:111.00px;width:1px;height:19.00px;background:#dfe2e6"></div>
<div class="t tr" style="left:36px;top:114.50px;width:80px;overflow:hidden;color:#222">Border Width</div>
<div class="t tr" style="left:121px;top:114.50px;color:#111">1</div>
<div class="a" style="left:18px;top:129.00px;width:214px;height:19.00px;background:#fff;border-top:1px solid #dfe2e6;border-left:1px solid #dfe2e6"></div>
<div class="a" style="left:116px;top:129.00px;width:1px;height:19.00px;background:#dfe2e6"></div>
<div class="t tr" style="left:36px;top:132.50px;width:80px;overflow:hidden;color:#222">Borders</div>
<div class="t tr" style="left:121px;top:132.50px;font-weight:bold;color:#000">None</div>
<div class="a" style="left:18px;top:147.00px;width:214px;height:19.00px;background:#fff;border-top:1px solid #dfe2e6;border-left:1px solid #dfe2e6"></div>
<div class="a" style="left:116px;top:147.00px;width:1px;height:19.00px;background:#dfe2e6"></div>
<div class="t tr" style="left:36px;top:150.50px;width:80px;overflow:hidden;color:#222">Fill Style</div>
<svg style="left:22px;top:152.00px" width="8" height="10"><path d="M1.5 1.5 l3.5 3.5 l-3.5 3.5" fill="none" stroke="#666" stroke-width="1.4"/></svg>
<div class="t tr" style="left:121px;top:150.50px;font-weight:bold;color:#000">(FillStyle)</div>
<div class="a" style="left:18px;top:165.00px;width:214px;height:20.00px;background:#fff;border-top:1px solid #dfe2e6;border-left:1px solid #dfe2e6"></div>
<div class="a" style="left:116px;top:165.00px;width:1px;height:20.00px;background:#dfe2e6"></div>
<div class="t tr" style="left:36px;top:168.50px;width:80px;overflow:hidden;color:#222">Formatting Rules</div>
<div class="t tr" style="left:121px;top:168.50px;color:#111">(Collection)</div>
<div class="a" style="left:18px;top:184.00px;width:214px;height:19.00px;background:#fff;border-top:1px solid #dfe2e6;border-left:1px solid #dfe2e6"></div>
<div class="a" style="left:116px;top:184.00px;width:1px;height:19.00px;background:#dfe2e6"></div>
<div class="t tr" style="left:36px;top:187.50px;width:80px;overflow:hidden;color:#222">Image Type</div>
<div class="t tr" style="left:121px;top:187.50px;color:#111">Metafile</div>
<div class="a" style="left:18px;top:202.00px;width:214px;height:19.00px;background:#fff;border-top:1px solid #dfe2e6;border-left:1px solid #dfe2e6"></div>
<div class="a" style="left:116px;top:202.00px;width:1px;height:19.00px;background:#dfe2e6"></div>
<div class="t tr" style="left:36px;top:205.50px;width:80px;overflow:hidden;color:#222">Indicators Palette</div>
<div class="t tr" style="left:121px;top:205.50px;color:#111">Default</div>
<div class="a" style="left:18px;top:220.00px;width:214px;height:19.00px;background:#fff;border-top:1px solid #dfe2e6;border-left:1px solid #dfe2e6"></div>
<div class="a" style="left:116px;top:220.00px;width:1px;height:19.00px;background:#dfe2e6"></div>
<div class="t tr" style="left:36px;top:223.50px;width:80px;overflow:hidden;color:#222">Padding</div>
<svg style="left:22px;top:225.00px" width="8" height="10"><path d="M1.5 1.5 l3.5 3.5 l-3.5 3.5" fill="none" stroke="#666" stroke-width="1.4"/></svg>
<div class="t tr" style="left:121px;top:223.50px;color:#111">5, 5, 5, 5</div>
<div class="a" style="left:18px;top:238.00px;width:214px;height:20.00px;background:#fff;border-top:1px solid #dfe2e6;border-left:1px solid #dfe2e6"></div>
<div class="a" style="left:116px;top:238.00px;width:1px;height:20.00px;background:#dfe2e6"></div>
<div class="t tr" style="left:36px;top:241.50px;width:80px;overflow:hidden;color:#222">Palette Name</div>
<div class="t tr" style="left:121px;top:241.50px;color:#111">Default</div>
<div class="a" style="left:18px;top:257.00px;width:214px;height:19.00px;background:#fff;border-top:1px solid #dfe2e6;border-left:1px solid #dfe2e6"></div>
<div class="a" style="left:116px;top:257.00px;width:1px;height:19.00px;background:#dfe2e6"></div>
<div class="t tr" style="left:36px;top:260.50px;width:80px;overflow:hidden;color:#222">Palette's Base Color</div>
<div class="t tr" style="left:121px;top:260.50px;color:#111">0</div>
<div class="a" style="left:18px;top:275.00px;width:214px;height:17.00px;background:#fff;border-top:1px solid #dfe2e6;border-left:1px solid #dfe2e6"></div>
<div class="a" style="left:116px;top:275.00px;width:1px;height:17.00px;background:#dfe2e6"></div>
<div class="t tr" style="left:36px;top:278.50px;width:80px;overflow:hidden;color:#222">Style Priority</div>
<svg style="left:22px;top:280.00px" width="8" height="10"><path d="M1.5 1.5 l3.5 3.5 l-3.5 3.5" fill="none" stroke="#666" stroke-width="1.4"/></svg>
<div class="t tr" style="left:121px;top:278.50px;color:#111">(Style Priority)</div>
<div class="t tr" style="left:21px;top:295.50px;color:#222">Behavior</div>
<svg style="left:215px;top:297.00px" width="14" height="8"><path d="M1.5 6 l4 -4 l4 4" fill="none" stroke="#555" stroke-width="1.4"/></svg>
<div class="a" style="left:18px;top:309.00px;width:214px;height:20.00px;background:#fff;border-top:1px solid #dfe2e6;border-left:1px solid #dfe2e6"></div>
<div class="a" style="left:116px;top:309.00px;width:1px;height:20.00px;background:#dfe2e6"></div>
<div class="t tr" style="left:36px;top:312.50px;width:80px;overflow:hidden;color:#222">Anchor Horizontal</div>
<div class="t tr" style="left:121px;top:312.50px;color:#111">None</div>
<div class="a" style="left:18px;top:328.00px;width:214px;height:20.00px;background:#fff;border-top:1px solid #dfe2e6;border-left:1px solid #dfe2e6"></div>
<div class="a" style="left:116px;top:328.00px;width:1px;height:20.00px;background:#dfe2e6"></div>
<div class="t tr" style="left:36px;top:331.50px;width:80px;overflow:hidden;color:#222">Anchor Vertically</div>
<div class="t tr" style="left:121px;top:331.50px;color:#111">None</div>
<div class="a" style="left:18px;top:347.00px;width:214px;height:17.00px;background:#fff;border-top:1px solid #dfe2e6;border-left:1px solid #dfe2e6"></div>
<div class="a" style="left:116px;top:347.00px;width:1px;height:17.00px;background:#dfe2e6"></div>
<div class="t tr" style="left:36px;top:350.50px;width:80px;overflow:hidden;color:#222">Empty Chart Text</div>
<svg style="left:22px;top:352.00px" width="8" height="10"><path d="M1.5 1.5 l3.5 3.5 l-3.5 3.5" fill="none" stroke="#666" stroke-width="1.4"/></svg>
<div class="t tr" style="left:121px;top:350.50px;color:#111">(EmptyChartText)</div>
<div class="a" style="left:18px;top:363.00px;width:214px;height:19.00px;background:#fff;border-top:1px solid #dfe2e6;border-left:1px solid #dfe2e6"></div>
<div class="a" style="left:116px;top:363.00px;width:1px;height:19.00px;background:#dfe2e6"></div>
<div class="t tr" style="left:36px;top:366.50px;width:80px;overflow:hidden;color:#222">Scripts</div>
<svg style="left:22px;top:368.00px" width="8" height="10"><path d="M1.5 1.5 l3.5 3.5 l-3.5 3.5" fill="none" stroke="#666" stroke-width="1.4"/></svg>
<div class="t tr" style="left:121px;top:366.50px;color:#111">(Chart Scripts)</div>
<div class="a" style="left:18px;top:381.00px;width:214px;height:19.00px;background:#fff;border-top:1px solid #dfe2e6;border-left:1px solid #dfe2e6"></div>
<div class="a" style="left:116px;top:381.00px;width:1px;height:19.00px;background:#dfe2e6"></div>
<div class="t tr" style="left:36px;top:384.50px;width:80px;overflow:hidden;color:#222">Small Chart Text</div>
<svg style="left:22px;top:386.00px" width="8" height="10"><path d="M1.5 1.5 l3.5 3.5 l-3.5 3.5" fill="none" stroke="#666" stroke-width="1.4"/></svg>
<div class="t tr" style="left:121px;top:384.50px;color:#111">(SmallChartText)</div>
<div class="a" style="left:18px;top:399.00px;width:214px;height:18.00px;background:#fff;border-top:1px solid #dfe2e6;border-left:1px solid #dfe2e6"></div>
<div class="a" style="left:116px;top:399.00px;width:1px;height:18.00px;background:#dfe2e6"></div>
<div class="t tr" style="left:36px;top:402.50px;width:80px;overflow:hidden;color:#222">Visible</div>
<div class="t tr" style="left:121px;top:402.50px;color:#111">Yes</div>
<div class="t tr" style="left:21px;top:420.50px;color:#222">Data</div>
<svg style="left:215px;top:422.00px" width="14" height="8"><path d="M1.5 6 l4 -4 l4 4" fill="none" stroke="#555" stroke-width="1.4"/></svg>
<div class="a" style="left:18px;top:434.00px;width:214px;height:19.00px;background:#fff;border-top:1px solid #dfe2e6;border-left:1px solid #dfe2e6"></div>
<div class="a" style="left:116px;top:434.00px;width:1px;height:19.00px;background:#dfe2e6"></div>
<div class="t tr" style="left:36px;top:437.50px;width:80px;overflow:hidden;color:#222">(Data Bindings)</div>
<svg style="left:22px;top:439.00px" width="8" height="10"><path d="M1.5 1.5 l3.5 3.5 l-3.5 3.5" fill="none" stroke="#666" stroke-width="1.4"/></svg>
<div class="t tr" style="left:121px;top:437.50px;color:#111"></div>
</div>
<div class="a" style="left:237px;top:746px;width:18px;height:440px;background:linear-gradient(90deg,#e9ebee,#f7f8f9 40%,#fbfbfc);border-right:1px solid #b4bac1"></div>
<div class="a" style="left:239px;top:763px;width:14px;height:185px;border:1px solid #c5cad0;border-radius:2px;background:linear-gradient(90deg,#f0f1f3,#e3e6ea)"></div>
<svg style="left:237px;top:746px" width="18" height="440"><path d="M4.5 11 l4.5 -4.5 l4.5 4.5z" fill="#555"/><path d="M4.5 429.5 l4.5 4.5 l4.5 -4.5z" fill="#555"/><path d="M5 105.5h8M5 107.5h8M5 109.5h8M5 111.5h8" stroke="#777" stroke-width="0.9"/></svg>
<div class="a" style="left:4px;top:1186px;width:252px;height:2px;background:#c5cad1"></div>
<!-- CANVAS -->
<div class="a" style="left:309px;top:163px;width:817px;height:15px;background:#fff;border:1px solid #a3a9b0"></div>
<div class="a" style="left:310px;top:164px;width:95px;height:13px;background:#cdd1d6"></div>
<div class="a" style="left:1029px;top:164px;width:96px;height:13px;background:#cdd1d6"></div>
<div class="a" style="left:276px;top:195px;width:15px;height:97px;background:#cdd1d6;border:1px solid #a3a9b0"></div>
<div class="a" style="left:276px;top:312px;width:15px;height:686px;background:#fff;border:1px solid #a3a9b0"></div>
<div class="a" style="left:277px;top:902px;width:13px;height:95px;background:#cdd1d6"></div>
<svg style="left:0;top:0" width="300" height="1010"><rect x="282" y="207" width="3" height="1.2" fill="#444"/><rect x="282" y="219" width="3" height="1.2" fill="#444"/><rect x="282" y="231" width="3" height="1.2" fill="#444"/><rect x="280" y="243" width="7" height="1" fill="#444"/><rect x="282" y="255" width="3" height="1.2" fill="#444"/><rect x="282" y="267" width="3" height="1.2" fill="#444"/><rect x="282" y="279" width="3" height="1.2" fill="#444"/><text x="283.5" y="294" font-family="Liberation Sans" font-size="10" fill="#8a6a40" text-anchor="middle">1</text><path d="M280 297.5h7M280 299.5h7M280 301.5h7M280 303.5h7" stroke="#666" stroke-width="0.9"/><rect x="282" y="324" width="3" height="1.2" fill="#444"/><rect x="282" y="336" width="3" height="1.2" fill="#444"/><rect x="282" y="348" width="3" height="1.2" fill="#444"/><rect x="280" y="360" width="7" height="1" fill="#444"/><rect x="282" y="372" width="3" height="1.2" fill="#444"/><rect x="282" y="384" width="3" height="1.2" fill="#444"/><rect x="282" y="396" width="3" height="1.2" fill="#444"/><text x="283.5" y="410" font-family="Liberation Sans" font-size="10" fill="#555" text-anchor="middle">1</text><rect x="282" y="420" width="3" height="1.2" fill="#444"/><rect x="282" y="432" width="3" height="1.2" fill="#444"/><rect x="282" y="444" width="3" height="1.2" fill="#444"/><rect x="280" y="456" width="7" height="1" fill="#444"/><rect x="282" y="468" width="3" height="1.2" fill="#444"/><rect x="282" y="480" width="3" height="1.2" fill="#444"/><rect x="282" y="492" width="3" height="1.2" fill="#444"/><text x="283.5" y="506" font-family="Liberation Sans" font-size="10" fill="#555" text-anchor="middle">2</text><rect x="282" y="516" width="3" height="1.2" fill="#444"/><rect x="282" y="528" width="3" height="1.2" fill="#444"/><rect x="282" y="540" width="3" height="1.2" fill="#444"/><rect x="280" y="552" width="7" height="1" fill="#444"/><rect x="282" y="564" width="3" height="1.2" fill="#444"/><rect x="282" y="576" width="3" height="1.2" fill="#444"/><rect x="282" y="588" width="3" height="1.2" fill="#444"/><text x="283.5" y="602" font-family="Liberation Sans" font-size="10" fill="#555" text-anchor="middle">3</text><rect x="282" y="612" width="3" height="1.2" fill="#444"/><rect x="282" y="624" width="3" height="1.2" fill="#444"/><rect x="282" y="636" width="3" height="1.2" fill="#444"/><rect x="280" y="648" width="7" height="1" fill="#444"/><rect x="282" y="660" width="3" height="1.2" fill="#444"/><rect x="282" y="672" width="3" height="1.2" fill="#444"/><rect x="282" y="684" width="3" height="1.2" fill="#444"/><text x="283.5" y="698" font-family="Liberation Sans" font-size="10" fill="#555" text-anchor="middle">4</text><rect x="282" y="708" width="3" height="1.2" fill="#444"/><rect x="282" y="720" width="3" height="1.2" fill="#444"/><rect x="282" y="732" width="3" height="1.2" fill="#444"/><rect x="280" y="744" width="7" height="1" fill="#444"/><rect x="282" y="756" width="3" height="1.2" fill="#444"/><rect x="282" y="768" width="3" height="1.2" fill="#444"/><rect x="282" y="780" width="3" height="1.2" fill="#444"/><text x="283.5" y="794" font-family="Liberation Sans" font-size="10" fill="#555" text-anchor="middle">5</text><rect x="282" y="804" width="3" height="1.2" fill="#444"/><rect x="282" y="816" width="3" height="1.2" fill="#444"/><rect x="282" y="828" width="3" height="1.2" fill="#444"/><rect x="280" y="840" width="7" height="1" fill="#444"/><rect x="282" y="852" width="3" height="1.2" fill="#444"/><rect x="282" y="864" width="3" height="1.2" fill="#444"/><rect x="282" y="876" width="3" height="1.2" fill="#444"/><text x="283.5" y="890" font-family="Liberation Sans" font-size="10" fill="#555" text-anchor="middle">6</text><rect x="282" y="900" width="3" height="1.2" fill="#444"/><rect x="282" y="913" width="3" height="1.2" fill="#444"/><rect x="282" y="925" width="3" height="1.2" fill="#444"/><rect x="282" y="937" width="3" height="1.2" fill="#444"/><rect x="280" y="949" width="7" height="1" fill="#444"/><rect x="282" y="961" width="3" height="1.2" fill="#444"/><rect x="282" y="973" width="3" height="1.2" fill="#444"/><rect x="282" y="985" width="3" height="1.2" fill="#444"/><text x="283.5" y="1000" font-family="Liberation Sans" font-size="10" fill="#8a6a40" text-anchor="middle">1</text></svg>
<svg style="left:0;top:0" width="1200" height="1010"><rect x="321" y="169" width="1" height="2" fill="#444"/><rect x="333" y="169" width="1" height="2" fill="#444"/><rect x="345" y="169" width="1" height="2" fill="#444"/><rect x="357" y="167" width="1" height="6" fill="#444"/><rect x="369" y="169" width="1" height="2" fill="#444"/><rect x="381" y="169" width="1" height="2" fill="#444"/><rect x="393" y="169" width="1" height="2" fill="#444"/><rect x="417" y="169" width="1" height="2" fill="#444"/><rect x="429" y="169" width="1" height="2" fill="#444"/><rect x="441" y="169" width="1" height="2" fill="#444"/><rect x="453" y="167" width="1" height="6" fill="#444"/><rect x="465" y="169" width="1" height="2" fill="#444"/><rect x="477" y="169" width="1" height="2" fill="#444"/><rect x="489" y="169" width="1" height="2" fill="#444"/><rect x="513" y="169" width="1" height="2" fill="#444"/><rect x="525" y="169" width="1" height="2" fill="#444"/><rect x="537" y="169" width="1" height="2" fill="#444"/><rect x="549" y="167" width="1" height="6" fill="#444"/><rect x="561" y="169" width="1" height="2" fill="#444"/><rect x="573" y="169" width="1" height="2" fill="#444"/><rect x="585" y="169" width="1" height="2" fill="#444"/><rect x="609" y="169" width="1" height="2" fill="#444"/><rect x="621" y="169" width="1" height="2" fill="#444"/><rect x="633" y="169" width="1" height="2" fill="#444"/><rect x="645" y="167" width="1" height="6" fill="#444"/><rect x="657" y="169" width="1" height="2" fill="#444"/><rect x="669" y="169" width="1" height="2" fill="#444"/><rect x="681" y="169" width="1" height="2" fill="#444"/><rect x="705" y="169" width="1" height="2" fill="#444"/><rect x="717" y="169" width="1" height="2" fill="#444"/><rect x="729" y="169" width="1" height="2" fill="#444"/><rect x="741" y="167" width="1" height="6" fill="#444"/><rect x="753" y="169" width="1" height="2" fill="#444"/><rect x="765" y="169" width="1" height="2" fill="#444"/><rect x="777" y="169" width="1" height="2" fill="#444"/><rect x="801" y="169" width="1" height="2" fill="#444"/><rect x="813" y="169" width="1" height="2" fill="#444"/><rect x="825" y="169" width="1" height="2" fill="#444"/><rect x="837" y="167" width="1" height="6" fill="#444"/><rect x="849" y="169" width="1" height="2" fill="#444"/><rect x="861" y="169" width="1" height="2" fill="#444"/><rect x="873" y="169" width="1" height="2" fill="#444"/><rect x="897" y="169" width="1" height="2" fill="#444"/><rect x="909" y="169" width="1" height="2" fill="#444"/><rect x="921" y="169" width="1" height="2" fill="#444"/><rect x="933" y="167" width="1" height="6" fill="#444"/><rect x="945" y="169" width="1" height="2" fill="#444"/><rect x="957" y="169" width="1" height="2" fill="#444"/><rect x="969" y="169" width="1" height="2" fill="#444"/><rect x="993" y="169" width="1" height="2" fill="#444"/><rect x="1005" y="169" width="1" height="2" fill="#444"/><rect x="1017" y="169" width="1" height="2" fill="#444"/><rect x="1029" y="167" width="1" height="6" fill="#444"/><rect x="1041" y="169" width="1" height="2" fill="#444"/><rect x="1053" y="169" width="1" height="2" fill="#444"/><rect x="1065" y="169" width="1" height="2" fill="#444"/><rect x="1089" y="169" width="1" height="2" fill="#444"/><rect x="1101" y="169" width="1" height="2" fill="#444"/><rect x="1113" y="169" width="1" height="2" fill="#444"/><rect x="1125" y="167" width="1" height="6" fill="#444"/><text x="501.5" y="174" font-family="Liberation Sans" font-size="10" fill="#555" text-anchor="middle">1</text><text x="597.5" y="174" font-family="Liberation Sans" font-size="10" fill="#555" text-anchor="middle">2</text><text x="693.5" y="174" font-family="Liberation Sans" font-size="10" fill="#555" text-anchor="middle">3</text><text x="789.5" y="174" font-family="Liberation Sans" font-size="10" fill="#555" text-anchor="middle">4</text><text x="885.5" y="174" font-family="Liberation Sans" font-size="10" fill="#555" text-anchor="middle">5</text><text x="981.5" y="174" font-family="Liberation Sans" font-size="10" fill="#555" text-anchor="middle">6</text><text x="1077.5" y="174" font-family="Liberation Sans" font-size="10" fill="#555" text-anchor="middle">7</text><text x="310" y="174" font-family="Liberation Sans" font-size="10" fill="#8a6a40" text-anchor="middle">1</text><rect x="405" y="164" width="1" height="13" fill="#8a9098"/><rect x="1029" y="164" width="1" height="13" fill="#8a9098"/><path d="M278 175 L288 165 L288 175 Z" fill="#a7adb4"/></svg>
<div class="a" style="left:308px;top:194px;width:818px;height:805px;background:#fff;border:1px solid #8e959d;box-shadow:-3px -3px 9px rgba(60,70,90,0.13),3px 3px 6px rgba(60,70,90,0.18)"></div>
<div class="a" style="left:309px;top:195px;width:816px;height:96px;background-image:linear-gradient(90deg,#e2e2e2 1px,transparent 1px),linear-gradient(#e2e2e2 1px,transparent 1px),linear-gradient(90deg,#efefef 1px,transparent 1px),linear-gradient(#efefef 1px,transparent 1px);background-size:48px 48px,48px 48px,12px 12px,12px 12px;background-position:0 -1px,0 -1px,0 11px,0 11px"></div>
<div class="a" style="left:309px;top:312px;width:816px;height:590px;background-image:linear-gradient(90deg,#e2e2e2 1px,transparent 1px),linear-gradient(#e2e2e2 1px,transparent 1px),linear-gradient(90deg,#efefef 1px,transparent 1px),linear-gradient(#efefef 1px,transparent 1px);background-size:48px 48px,48px 48px,12px 12px,12px 12px;background-position:0 0px,0 0px,0 0px,0 0px"></div>
<div class="a" style="left:309px;top:902px;width:816px;height:96px;background-image:linear-gradient(90deg,#e2e2e2 1px,transparent 1px),linear-gradient(#e2e2e2 1px,transparent 1px),linear-gradient(90deg,#efefef 1px,transparent 1px),linear-gradient(#efefef 1px,transparent 1px);background-size:48px 48px,48px 48px,12px 12px,12px 12px;background-position:0 0px,0 0px,0 0px,0 0px"></div>
<div class="a" style="left:405px;top:195px;width:1px;height:96px;border-left:1px dashed #8a8a8a"></div>
<div class="a" style="left:1029px;top:195px;width:1px;height:96px;border-left:1px dashed #8a8a8a"></div>
<div class="a" style="left:405px;top:903px;width:1px;height:95px;border-left:1px dashed #8a8a8a"></div>
<div class="a" style="left:1029px;top:903px;width:1px;height:95px;border-left:1px dashed #8a8a8a"></div>
<div class="a" style="left:309px;top:902px;width:96px;height:1px;border-top:1px dashed #8a8a8a"></div>
<div class="a" style="left:1030px;top:902px;width:95px;height:1px;border-top:1px dashed #8a8a8a"></div>
<div class="a" style="left:309px;top:290px;width:816px;height:22px;background:#f2f2f2;border-top:2px solid #d2d5d9;border-bottom:1px solid #c8ccd1"></div>
<svg style="left:300px;top:290px" width="760" height="22"><path d="M15 9 h8 l-4 6z" fill="#555"/><rect x="29.5" y="4.5" width="13" height="15" fill="#fff" stroke="#5b8fd0"/><path d="M31 4.5v15M41 4.5v15" stroke="#9dbbe5" stroke-width="0.8"/><rect x="32.5" y="7.5" width="7" height="9" fill="#fff" stroke="#555" stroke-width="0.8"/><path d="M34 10h4M34 12h4M34 14h3" stroke="#555" stroke-width="0.8"/><rect x="718.5" y="6.5" width="10" height="10" fill="#fff" stroke="#222"/><path d="M721.5 9 l3 2.5 l-3 2.5" fill="none" stroke="#222" stroke-width="1.1"/></svg>
<div class="t" style="left:347px;top:297px;color:#6a6a6a;font-size:11.5px">Detail</div>
<div class="a" style="left:404px;top:311px;width:627px;height:593px;background:#fff;border:1px solid #6f8fc0"></div>
<div class="a" style="left:405px;top:312px;width:1px;height:591px;border-left:1px dashed #9aa"></div>
<div class="a" style="left:1029px;top:312px;width:1px;height:591px;border-left:1px dashed #9aa"></div>
<div class="a" style="left:405px;top:903px;width:625px;height:1px;border-top:1px dotted #fff"></div>
<div class="a" style="left:397px;top:304px;width:5px;height:5px;background:#6f95c8"></div>
<div class="a" style="left:715px;top:304px;width:5px;height:5px;background:#6f95c8"></div>
<div class="a" style="left:1032px;top:304px;width:5px;height:5px;background:#6f95c8"></div>
<div class="a" style="left:397px;top:604px;width:5px;height:5px;background:#6f95c8"></div>
<div class="a" style="left:1032px;top:604px;width:5px;height:5px;background:#6f95c8"></div>
<div class="a" style="left:397px;top:905px;width:5px;height:5px;background:#6f95c8"></div>
<div class="a" style="left:715px;top:905px;width:5px;height:5px;background:#6f95c8"></div>
<div class="a" style="left:1032px;top:905px;width:5px;height:5px;background:#6f95c8"></div>
<svg style="left:0;top:0" width="1100" height="1000"><defs><linearGradient id="gA" x1="0" y1="0" x2="1" y2="0"><stop offset="0" stop-color="#31849b"/><stop offset="1" stop-color="#4bacc6"/></linearGradient><linearGradient id="gB" x1="0" y1="0" x2="1" y2="0"><stop offset="0" stop-color="#5f497a"/><stop offset="1" stop-color="#8064a2"/></linearGradient><linearGradient id="gC" x1="0" y1="0" x2="1" y2="0"><stop offset="0" stop-color="#76923c"/><stop offset="1" stop-color="#9bbb59"/></linearGradient><linearGradient id="gD" x1="0" y1="0" x2="1" y2="0"><stop offset="0" stop-color="#943634"/><stop offset="1" stop-color="#c0504d"/></linearGradient><linearGradient id="gE" x1="0" y1="0" x2="1" y2="0"><stop offset="0" stop-color="#365f91"/><stop offset="1" stop-color="#4f81bd"/></linearGradient></defs><path d="M973.80 606.50 A280.5 280.5 0 0 1 855.37 835.44 L807.70 768.11 A198 198 0 0 0 891.30 606.50Z" fill="url(#gA)" stroke="rgba(255,255,255,0.45)" stroke-width="0.8"/><path d="M855.37 835.44 A280.5 280.5 0 0 1 531.23 835.44 L578.90 768.11 A198 198 0 0 0 807.70 768.11Z" fill="url(#gB)" stroke="rgba(255,255,255,0.45)" stroke-width="0.8"/><path d="M531.23 835.44 A280.5 280.5 0 0 1 676.03 326.53 L681.11 408.88 A198 198 0 0 0 578.90 768.11Z" fill="url(#gC)" stroke="rgba(255,255,255,0.45)" stroke-width="0.8"/><path d="M676.03 326.53 A280.5 280.5 0 0 1 944.39 481.47 L870.54 518.24 A198 198 0 0 0 681.11 408.88Z" fill="url(#gD)" stroke="rgba(255,255,255,0.45)" stroke-width="0.8"/><path d="M944.39 481.47 A280.5 280.5 0 0 1 973.80 606.50 L891.30 606.50 A198 198 0 0 0 870.54 518.24Z" fill="url(#gE)" stroke="rgba(255,255,255,0.45)" stroke-width="0.8"/><path d="M886.30 606.50 A193 193 0 0 1 878.67 660.23 L800.87 637.68 A112 112 0 0 0 805.30 606.50Z" fill="url(#gA)" stroke="rgba(255,255,255,0.45)" stroke-width="0.8"/><path d="M878.67 660.23 A193 193 0 0 1 622.02 785.86 L651.94 710.58 A112 112 0 0 0 800.87 637.68Z" fill="url(#gB)" stroke="rgba(255,255,255,0.45)" stroke-width="0.8"/><path d="M622.02 785.86 A193 193 0 0 1 506.00 559.94 L584.61 579.48 A112 112 0 0 0 651.94 710.58Z" fill="url(#gC)" stroke="rgba(255,255,255,0.45)" stroke-width="0.8"/><path d="M506.00 559.94 A193 193 0 0 1 771.42 430.02 L738.64 504.09 A112 112 0 0 0 584.61 579.48Z" fill="url(#gD)" stroke="rgba(255,255,255,0.45)" stroke-width="0.8"/><path d="M771.42 430.02 A193 193 0 0 1 886.30 606.50 L805.30 606.50 A112 112 0 0 0 738.64 504.09Z" fill="url(#gE)" stroke="rgba(255,255,255,0.45)" stroke-width="0.8"/></svg>
<div class="a lab" style="left:796px;top:387px;color:#863835">D<br>380%</div>
<div class="a lab" style="left:805px;top:511px;color:#375a84">E<br>450%</div>
<div class="a lab" style="left:909px;top:539px;color:#375a84">E<br>150%</div>
<div class="a lab" style="left:610px;top:457px;color:#863835">D<br>680%</div>
<div class="a lab" style="left:447px;top:529px;color:#6c823e">C<br>800%</div>
<div class="a lab" style="left:541px;top:664px;color:#6c823e">C<br>560%</div>
<div class="a lab" style="left:677px;top:833px;color:#594671">B<br>400%</div>
<div class="a lab" style="left:744px;top:731px;color:#594671">B<br>650%</div>
<div class="a lab" style="left:828px;top:615px;color:#34788a">A<br>110%</div>
<div class="a lab" style="left:889px;top:704px;color:#34788a">A<br>310%</div>
<div class="a" style="left:981px;top:322px;width:39px;height:185px;background:#fff;border:1px solid #a6a6a6"></div>
<svg style="left:0;top:0" width="1100" height="600"><path d="M985 326 A18.5 14 0 0 1 1003.5 340 L997.5 340 A12.5 9.2 0 0 0 985 330.8 Z" fill="url(#gE)"/><text x="1007" y="337" font-family="Liberation Sans" font-size="11" fill="#222">E</text><path d="M985 344 A18.5 14 0 0 1 1003.5 358 L997.5 358 A12.5 9.2 0 0 0 985 348.8 Z" fill="url(#gD)"/><text x="1007" y="355" font-family="Liberation Sans" font-size="11" fill="#222">D</text><path d="M985 362 A18.5 14 0 0 1 1003.5 376 L997.5 376 A12.5 9.2 0 0 0 985 366.8 Z" fill="url(#gC)"/><text x="1007" y="373" font-family="Liberation Sans" font-size="11" fill="#222">C</text><path d="M985 380 A18.5 14 0 0 1 1003.5 394 L997.5 394 A12.5 9.2 0 0 0 985 384.8 Z" fill="url(#gB)"/><text x="1007" y="391" font-family="Liberation Sans" font-size="11" fill="#222">B</text><path d="M985 398 A18.5 14 0 0 1 1003.5 412 L997.5 412 A12.5 9.2 0 0 0 985 402.8 Z" fill="url(#gA)"/><text x="1007" y="409" font-family="Liberation Sans" font-size="11" fill="#222">A</text><path d="M985 416 A18.5 14 0 0 1 1003.5 430 L997.5 430 A12.5 9.2 0 0 0 985 420.8 Z" fill="url(#gE)"/><text x="1007" y="427" font-family="Liberation Sans" font-size="11" fill="#222">E</text><path d="M985 434 A18.5 14 0 0 1 1003.5 448 L997.5 448 A12.5 9.2 0 0 0 985 438.8 Z" fill="url(#gD)"/><text x="1007" y="445" font-family="Liberation Sans" font-size="11" fill="#222">D</text><path d="M985 452 A18.5 14 0 0 1 1003.5 466 L997.5 466 A12.5 9.2 0 0 0 985 456.8 Z" fill="url(#gC)"/><text x="1007" y="463" font-family="Liberation Sans" font-size="11" fill="#222">C</text><path d="M985 470 A18.5 14 0 0 1 1003.5 484 L997.5 484 A12.5 9.2 0 0 0 985 474.8 Z" fill="url(#gB)"/><text x="1007" y="481" font-family="Liberation Sans" font-size="11" fill="#222">B</text><path d="M985 488 A18.5 14 0 0 1 1003.5 502 L997.5 502 A12.5 9.2 0 0 0 985 492.8 Z" fill="url(#gA)"/><text x="1007" y="499" font-family="Liberation Sans" font-size="11" fill="#222">A</text></svg>
<!-- /CANVAS -->
<!-- REST -->
<div class="a" style="left:1476px;top:148px;width:176px;height:1041px;border:1px solid #9ea5ad;border-radius:3px 3px 0 0;background:#e9ecf0"></div>
<div class="t hdr" style="left:1482px;top:155px">Tool Box</div>
<svg style="left:1600px;top:155px" width="60" height="12"><path d="M21.5 0.5 h5 v5 h-5z M20 5.5 h8 M24 6 v4" fill="none" stroke="#50555c" stroke-width="1.2"/><path d="M36 0.5 l9 8 M45 0.5 l-9 8" stroke="#50555c" stroke-width="2"/></svg>
<div class="a" style="left:1480px;top:173px;width:168px;height:27px;border:1px solid #aab1b9;background:linear-gradient(#e6e9ee,#d3d8df 50%,#e0e4e9)"></div>
<div class="t" style="left:1488px;top:182px;color:#222;letter-spacing:-0.3px">Standard Controls</div>
<svg style="left:1625px;top:182px" width="14" height="10"><path d="M2 6 l4.5 -4 l4.5 4" fill="none" stroke="#444" stroke-width="1.6"/></svg>
<div class="t" style="left:1521px;top:216px;color:#6b7079;text-decoration:underline;letter-spacing:-0.2px">Pointer</div>
<div class="t" style="left:1521px;top:248px;color:#222;letter-spacing:-0.2px">Label</div>
<div class="t" style="left:1521px;top:280px;color:#222;letter-spacing:-0.2px">Check Box</div>
<div class="t" style="left:1521px;top:312px;color:#222;letter-spacing:-0.2px">Rich Text</div>
<div class="t" style="left:1521px;top:344px;color:#222;letter-spacing:-0.2px">Picture Box</div>
<div class="t" style="left:1521px;top:376px;color:#222;letter-spacing:-0.2px">Panel</div>
<div class="t" style="left:1521px;top:408px;color:#222;letter-spacing:-0.2px">Table</div>
<div class="t" style="left:1521px;top:440px;color:#222;letter-spacing:-0.2px">Line</div>
<div class="t" style="left:1521px;top:472px;color:#222;letter-spacing:-0.2px">Shape</div>
<div class="t" style="left:1521px;top:504px;color:#222;letter-spacing:-0.2px">Bar Code</div>
<div class="t" style="left:1521px;top:536px;color:#222;letter-spacing:-0.2px">Zip Code</div>
<div class="t" style="left:1521px;top:568px;color:#222;letter-spacing:-0.2px">Chart</div>
<div class="t" style="left:1521px;top:600px;color:#222;letter-spacing:-0.2px">Gauge</div>
<div class="t" style="left:1521px;top:632px;color:#222;letter-spacing:-0.2px">Sparkline</div>
<div class="t" style="left:1521px;top:664px;color:#222;letter-spacing:-0.2px">Table Of Contents</div>
<div class="t" style="left:1521px;top:696px;color:#222;letter-spacing:-0.2px">Page Info</div>
<div class="t" style="left:1521px;top:728px;color:#222;letter-spacing:-0.2px">Page Break</div>
<div class="t" style="left:1521px;top:760px;color:#222;letter-spacing:-0.2px">Cross-band Line</div>
<div class="t" style="left:1521px;top:792px;color:#222;letter-spacing:-0.2px">Cross-band Box</div>
<svg style="left:1480px;top:200px" width="60" height="620"><defs><linearGradient id="pbg" x1="0" y1="0" x2="0" y2="1"><stop offset="0" stop-color="#6a4020"/><stop offset="0.45" stop-color="#e07a22"/><stop offset="0.8" stop-color="#f5a030"/><stop offset="1" stop-color="#f8d050"/></linearGradient><linearGradient id="panelg" x1="0" y1="0" x2="1" y2="1"><stop offset="0" stop-color="#e8ebef"/><stop offset="1" stop-color="#a9b0ba"/></linearGradient></defs><path d="M16 12 L16 27 L19.5 24 L22 30 L24.5 29 L22 23 L27 23 Z" fill="#8d96a2" stroke="#5d6672" stroke-width="0.8"/><text x="21" y="62.5" font-family="Liberation Serif" font-weight="bold" font-size="23" fill="#3f76c8" text-anchor="middle">A</text><rect x="11.5" y="75.5" width="18" height="19" rx="2" fill="#fff" stroke="#7f9ab8"/><path d="M15 85 l4 4 l7 -9" fill="none" stroke="#2f6ed0" stroke-width="2.2"/><rect x="12.5" y="106.5" width="17" height="21" fill="#fff" stroke="#7f9ab8"/><text x="21" y="118" font-family="Liberation Serif" font-weight="bold" font-size="11" fill="#d2601a" text-anchor="middle">A</text><path d="M16 120.5h10M16 122.5h10M16 124.5h10" stroke="#7f8fa8" stroke-width="0.8"/><rect x="10.5" y="140.5" width="21" height="17" fill="#e87a1a" stroke="#8a8f96"/><rect x="12" y="142" width="18" height="14" fill="url(#pbg)"/><path d="M17.5 156 q1.5 -6 0 -10 M13.5 148 q3 -4 7 -1 M17 146 q4 -2 6 1.5 M17 146 q-1 3 -3 3" stroke="#1a1008" stroke-width="1" fill="none"/><rect x="11.5" y="171.5" width="19" height="19" rx="2" fill="url(#panelg)" stroke="#6f7782"/><rect x="14.5" y="174.5" width="13" height="13" fill="#c4cad2" stroke="#9aa2ac" stroke-width="0.8"/><rect x="10.5" y="204.5" width="21" height="17" fill="#fff" stroke="#6d7d90"/><rect x="11" y="205" width="20" height="5" fill="#5a8fd6"/><path d="M11 212.5h20M11 216.5h20M17.5 205v16M24.5 205v16" stroke="#b9c5d5" stroke-width="1"/><path d="M17.5 205v5M24.5 205v5M11 207.5h20" stroke="#fff" stroke-width="0.8"/><path d="M13 236 L28 251" stroke="#555" stroke-width="1.2"/><rect x="10.5" y="233.5" width="3" height="3" fill="#fff" stroke="#555"/><rect x="27.5" y="250.5" width="3" height="3" fill="#fff" stroke="#555"/><rect x="11.5" y="266.5" width="12" height="12" fill="#6cc22a" stroke="#3a8a10"/><circle cx="24" cy="280" r="7" fill="#9cc8f0" stroke="#3a6aa8"/><rect x="11.5" y="299.5" width="20" height="19" fill="#fff" stroke="#6f8fc0"/><rect x="15.0" y="303" width="1.2" height="11" fill="#333"/><rect x="16.6" y="303" width="0.8" height="11" fill="#333"/><rect x="18.2" y="303" width="0.8" height="11" fill="#333"/><rect x="19.8" y="303" width="1.2" height="11" fill="#333"/><rect x="21.4" y="303" width="0.8" height="11" fill="#333"/><rect x="23.0" y="303" width="0.8" height="11" fill="#333"/><rect x="24.6" y="303" width="1.2" height="11" fill="#333"/><rect x="26.2" y="303" width="0.8" height="11" fill="#333"/><rect x="11.5" y="331.5" width="20" height="19" fill="#fff" stroke="#6f8fc0"/><text x="21.5" y="345.5" font-family="Liberation Mono" font-weight="bold" font-size="12" fill="#3a6ad0" text-anchor="middle">88</text><rect x="12.5" y="371.5" width="5" height="9" fill="#7cc832" stroke="#4a9a20" stroke-width="0.8"/><rect x="18.5" y="363.5" width="5" height="17" fill="#f08a30" stroke="#c86010" stroke-width="0.8"/><rect x="24.5" y="368.5" width="5" height="12" fill="#6aa6e8" stroke="#3a76c0" stroke-width="0.8"/><circle cx="21" cy="405" r="10" fill="#fff" stroke="#222" stroke-width="1.4"/><path d="M14 409 a7.5 7.5 0 0 1 11 -9" fill="none" stroke="#3a9ae8" stroke-width="2.5"/><path d="M27 403 a7.5 7.5 0 0 1 -1 7" fill="none" stroke="#e05a2a" stroke-width="2.5"/><path d="M20 406 l6 -6" stroke="#222" stroke-width="1.6"/><circle cx="20" cy="406" r="1.6" fill="#222"/><rect x="10.5" y="428.5" width="21" height="17" fill="#fff" stroke="#8a9098"/><path d="M13 442 l4 -4 l3 2 l4 -5 l3 2 l3 -3" fill="none" stroke="#d03a2a" stroke-width="1.1"/><rect x="11.5" y="458.5" width="20" height="21" rx="1" fill="#5a9ae8" stroke="#3a6ab8"/><path d="M15 463.5h8M15 466.5h8M15 469.5h8M15 472.5h8M15 475.5h8" stroke="#fff" stroke-width="1"/><path d="M25 463.5h3M25 466.5h3M25 469.5h3M25 472.5h3M25 475.5h3" stroke="#fff" stroke-width="1" stroke-dasharray="1 1"/><path d="M12.5 490.5 h11 l4 4 v15 h-15z" fill="#fff" stroke="#7f8fa8"/><path d="M15 495h7M15 498h9M15 501h9" stroke="#8a9ab0" stroke-width="0.9"/><rect x="20.5" y="501.5" width="10" height="10" rx="1.5" fill="#3a72c8" stroke="#2a5aa8"/><text x="25.5" y="510" font-family="Liberation Serif" font-weight="bold" font-size="9" fill="#fff" text-anchor="middle">i</text><rect x="14.5" y="521.5" width="14" height="8" fill="#fff" stroke="#8a9ab0"/><path d="M16.5 524h10M16.5 526.5h10" stroke="#8a9ab0" stroke-width="0.8"/><rect x="14.5" y="536.5" width="14" height="8" fill="#fff" stroke="#8a9ab0"/><path d="M16.5 539h10M16.5 541.5h10" stroke="#8a9ab0" stroke-width="0.8"/><path d="M12 530 l3 3 l-3 3z M31 530 l-3 3 l3 3z" fill="#4aa020"/><path d="M12 533h19" stroke="#4aa020" stroke-width="0.6" stroke-dasharray="1 1"/><rect x="11.5" y="559.5" width="21" height="4" rx="1" fill="#5a9ae8" stroke="#3a6ab8"/><rect x="11.5" y="566.5" width="21" height="4" rx="1" fill="#5a9ae8" stroke="#3a6ab8"/><path d="M21.5 556v18" stroke="#555"/><rect x="20" y="554" width="3" height="3" fill="#fff" stroke="#555" stroke-width="0.8"/><rect x="20" y="574" width="3" height="3" fill="#fff" stroke="#555" stroke-width="0.8"/><rect x="11.5" y="591.5" width="21" height="4" rx="1" fill="#5a9ae8" stroke="#3a6ab8"/><rect x="11.5" y="598.5" width="21" height="4" rx="1" fill="#5a9ae8" stroke="#3a6ab8"/><rect x="13.5" y="587.5" width="17" height="19" fill="none" stroke="#555" stroke-width="0.8"/><rect x="12" y="586" width="3" height="3" fill="#fff" stroke="#555" stroke-width="0.7"/><rect x="29" y="586" width="3" height="3" fill="#fff" stroke="#555" stroke-width="0.7"/><rect x="12" y="605" width="3" height="3" fill="#fff" stroke="#555" stroke-width="0.7"/><rect x="29" y="605" width="3" height="3" fill="#fff" stroke="#555" stroke-width="0.7"/></svg>
<div class="a" style="left:262px;top:1084px;width:1210px;height:105px;border:1px solid #9ea5ad;border-radius:3px 3px 0 0;background:#e9ecf0"></div>
<div class="t hdr" style="left:267px;top:1091px">Scripts Errors</div>
<svg style="left:1430px;top:1090px" width="40" height="12"><path d="M9.5 0.5 h5 v5 h-5z M8 5.5 h8 M12 6 v4" fill="none" stroke="#50555c" stroke-width="1.2"/><path d="M26 1 l9 8 M35 1 l-9 8" stroke="#50555c" stroke-width="2"/></svg>
<div class="a" style="left:263px;top:1107px;width:1207px;height:80px;border:1px solid #a2a9b1;background:#fff"></div>
<div class="a" style="left:264px;top:1108px;width:1205px;height:20px;background:linear-gradient(#f7f8fa,#eceef1);border-bottom:1px solid #9aa1a9"></div>
<div class="a" style="left:1206px;top:1108px;width:1px;height:20px;background:#aab0b7"></div>
<div class="a" style="left:1337px;top:1108px;width:1px;height:20px;background:#aab0b7"></div>
<div class="a" style="left:1467px;top:1108px;width:1px;height:20px;background:#aab0b7"></div>
<div class="t" style="left:268px;top:1112px;color:#222;letter-spacing:-0.2px">Description</div>
<div class="t" style="left:1211px;top:1112px;color:#222;letter-spacing:-0.2px">Line</div>
<div class="t" style="left:1341px;top:1112px;color:#222;letter-spacing:-0.2px">Column</div>
<div class="t" style="left:815px;top:1153px;width:100px;text-align:center;color:#555;letter-spacing:-0.25px">All scripts are valid.</div>
<div class="a" style="left:1px;top:1192px;width:1653px;height:25px;background:linear-gradient(#eef0f3,#d9dde3);border-top:1px solid #b8bec6"></div>
<div class="t" style="left:8px;top:1200px;color:#222;letter-spacing:-0.2px">Nothing</div>
<div class="a" style="left:53px;top:1196px;width:1px;height:18px;background:#b5bbc3"></div>
<div class="a" style="left:1437px;top:1196px;width:1px;height:18px;background:#b5bbc3"></div>
<div class="t" style="left:1446px;top:1200px;color:#222;letter-spacing:-0.4px">100%</div>
<svg style="left:1480px;top:1192px" width="175" height="26"><circle cx="15.7" cy="12.8" r="7.6" fill="#f6f7f9" stroke="#8b8c9e" stroke-width="1.3"/><path d="M11.8 12.8h7.8" stroke="#505050" stroke-width="2"/><path d="M31 13.5h42" stroke="#3a78c8" stroke-width="1.3"/><path d="M73 13.5h52" stroke="#aab0b8" stroke-width="1"/><path d="M73 6.5h8v10l-4 4l-4 -4z" fill="#fde08a" stroke="#c9a44a"/><circle cx="139.8" cy="12.8" r="7.6" fill="#f6f7f9" stroke="#8b8c9e" stroke-width="1.3"/><path d="M135.9 12.8h7.8M139.8 8.9v7.8" stroke="#505050" stroke-width="2"/><path d="M168 20h1.6M164 20h1.6M160 20h1.6M168 16h1.6M164 16h1.6M168 12h1.6" stroke="#8a9098" stroke-width="1.6"/></svg>
<!-- /REST -->

<!-- cursor -->
<svg style="left:0;top:0" width="1240" height="40"><path d="M1211.8 16.8 L1211.8 32 L1215.6 28.6 L1218.6 34.2 L1220.8 33 L1218.2 28 L1222.6 28 Z" fill="#fff" stroke="#111" stroke-width="1.1" stroke-linejoin="round"/></svg>
</body></html>
